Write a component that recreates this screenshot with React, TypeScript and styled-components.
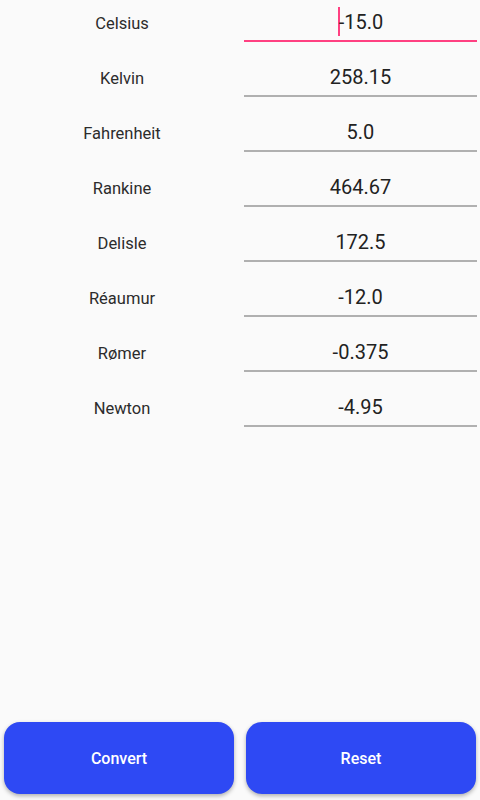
import React from 'react';
import styled, { createGlobalStyle } from 'styled-components';

const GlobalStyle = createGlobalStyle`
  html, body {
    margin: 0;
    padding: 0;
    background: #fafafa;
  }
  body {
    font-family: Roboto, "Liberation Sans", sans-serif;
  }
`;

const Screen = styled.div`
  height: 100vh;
  display: flex;
  flex-direction: column;
  background: #fafafa;
`;

const List = styled.div`
  display: flex;
  flex-direction: column;
`;

const Row = styled.div`
  display: grid;
  grid-template-columns: 244px 233px;
  height: 55px;
`;

const Label = styled.div`
  height: 44px;
  display: flex;
  align-items: center;
  justify-content: center;
  padding-top: 2px;
  box-sizing: border-box;
  font-size: 16.5px;
  color: #2c2c2c;
`;

const Field = styled.div<{ $active?: boolean }>`
  height: 42px;
  box-sizing: border-box;
  display: flex;
  align-items: center;
  justify-content: center;
  border-bottom: 2px solid ${(p) => (p.$active ? '#ff4081' : '#b0b0b0')};
  font-size: 20px;
  color: #222;
  padding-top: 4px;
`;

const Caret = styled.span`
  display: inline-block;
  width: 2px;
  height: 29px;
  margin-right: -1px;
  margin-top: -2px;
  background: #ff4081;
`;

const Actions = styled.div`
  margin-top: auto;
  display: grid;
  grid-template-columns: 1fr 1fr;
  gap: 12px;
  padding: 0 4px 6px 4px;
`;

const Button = styled.button`
  height: 72px;
  border: none;
  border-radius: 16px;
  background: #2e49f4;
  color: #fff;
  font-family: Roboto, "Liberation Sans", sans-serif;
  font-size: 16px;
  font-weight: 500;
  box-shadow: 0 2px 4px rgba(0, 0, 0, 0.3);
`;

const rows = [
  { name: 'Celsius', value: '-15.0', active: true },
  { name: 'Kelvin', value: '258.15' },
  { name: 'Fahrenheit', value: '5.0' },
  { name: 'Rankine', value: '464.67' },
  { name: 'Delisle', value: '172.5' },
  { name: 'Réaumur', value: '-12.0' },
  { name: 'Rømer', value: '-0.375' },
  { name: 'Newton', value: '-4.95' },
];

const App: React.FC = () => (
  <>
    <GlobalStyle />
    <Screen>
      <List>
        {rows.map((r) => (
          <Row key={r.name}>
            <Label>{r.name}</Label>
            <Field $active={r.active}>
              {r.active && <Caret />}
              {r.value}
            </Field>
          </Row>
        ))}
      </List>
      <Actions>
        <Button>Convert</Button>
        <Button>Reset</Button>
      </Actions>
    </Screen>
  </>
);

export default App;
